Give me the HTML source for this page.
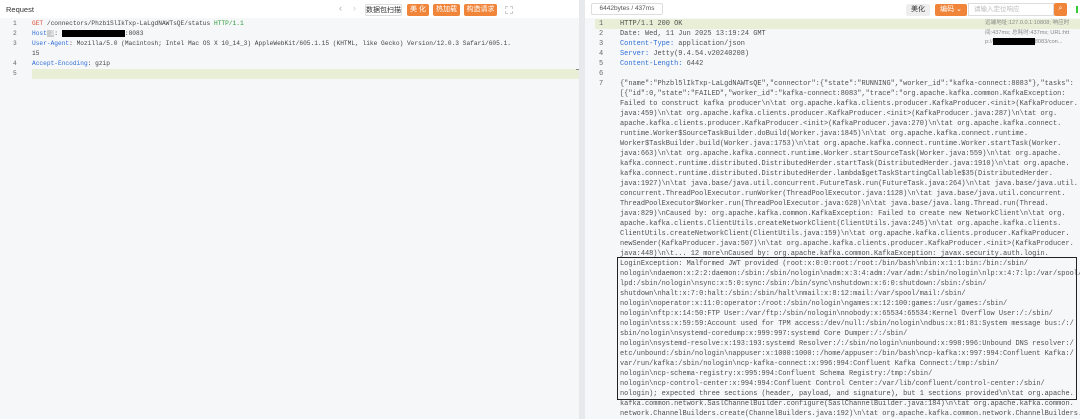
<!DOCTYPE html>
<html><head><meta charset="utf-8"><style>
*{margin:0;padding:0;box-sizing:border-box}
body{width:1080px;height:419px;background:#fff;position:relative;overflow:hidden;font-family:"Liberation Sans","Noto Sans CJK SC",sans-serif}
.abs{position:absolute}
.mono{font-family:"Liberation Mono",monospace;white-space:pre}
.k{color:#2f6fd6}
.btn{position:absolute;top:4px;height:12px;font-size:7px;line-height:12px;text-align:center;border-radius:2px;color:#fff;background:#f0853a}
.ln{position:absolute;color:#666;text-align:right}
</style></head><body>
<!-- left panel -->
<div class="abs" style="left:0;top:0;width:579px;height:419px;background:#f6f7f9"></div>
<div class="abs" style="left:0;top:0;width:579px;height:18px;background:#fff"></div>
<div class="abs" style="left:6px;top:5px;font-size:7.5px;color:#333">Request</div>
<div class="abs" style="left:339px;top:3px;font-size:9px;color:#aaa">‹</div>
<div class="abs" style="left:353px;top:3px;font-size:9px;color:#ccc">›</div>
<div class="btn" style="left:365px;width:37px;background:#fff;color:#333;border:1px solid #ddd">数据包扫描</div>
<div class="btn" style="left:407px;width:22px">美 化</div>
<div class="btn" style="left:433px;width:27px">热加载</div>
<div class="btn" style="left:464px;width:33px">构造请求</div>
<div class="abs" style="left:505px;top:6px;width:8px;height:8px;border:1px dashed #ccc"></div>
<div class="abs" style="left:32px;top:69px;width:547px;height:10px;background:#e9efd6"></div>
<div class="abs" style="left:576px;top:69px;width:3px;height:1px;background:#888"></div>
<div class="mono abs" style="left:0;top:19px;font-size:6.2px;line-height:10px;color:#444">
<span class="ln" style="left:13px;top:0">1</span><span class="ln" style="left:13px;top:10px">2</span><span class="ln" style="left:13px;top:20px">3</span><span class="ln" style="left:13px;top:40px">4</span><span class="ln" style="left:13px;top:50px">5</span>
<span class="abs" style="left:32px;top:0"><span style="color:#e0503a">GET</span> /connectors/Phzb1SlIkTxp-LaLgdNAWTsQE/status <span style="color:#2a9a3a">HTTP/1.1</span>
<span class="k">Host</span><span style="background:#ccc;color:#fff"> 2</span>: <span style="background:#000">                 </span>:8083
<span class="k">User-Agent</span>: Mozilla/5.0 (Macintosh; Intel Mac OS X 10_14_3) AppleWebKit/605.1.15 (KHTML, like Gecko) Version/12.0.3 Safari/605.1.
15
<span class="k">Accept-Encoding</span>: gzip</span>
</div>
<!-- divider -->
<div class="abs" style="left:579px;top:0;width:6px;height:419px;background:#e8e9ec"></div>
<!-- right panel -->
<div class="abs" style="left:585px;top:0;width:495px;height:419px;background:#f6f7f9"></div>
<div class="abs" style="left:585px;top:0;width:495px;height:18px;background:#fff"></div>
<div class="abs" style="left:591px;top:3px;width:72px;height:12px;border:1px solid #ddd;border-radius:2px;font-size:6.5px;line-height:10px;text-align:center;color:#555">6442bytes / 437ms</div>
<div class="btn" style="left:906px;width:24px;background:#eee;color:#333">美化</div>
<div class="btn" style="left:935px;width:32px">编码 ⌄</div>
<div class="abs" style="left:968px;top:3px;width:86px;height:13px;border:1px solid #ddd;font-size:6.5px;line-height:11px;color:#bbb;padding-left:5px">请输入定位响应</div>
<div class="btn" style="left:1054px;top:3px;height:13px;width:13px;font-size:7px">⌕</div>
<div class="abs" style="left:1076px;top:6px;width:2px;height:7px;background:#3c3"></div>
<div class="abs" style="left:595px;top:19px;width:485px;height:10px;background:#e9efd6"></div>
<div class="mono abs" style="left:585px;top:19px;font-size:6.95px;line-height:10px;color:#505050">
<span class="ln" style="left:14px;top:0">1</span><span class="ln" style="left:14px;top:10px">2</span><span class="ln" style="left:14px;top:20px">3</span><span class="ln" style="left:14px;top:30px">4</span><span class="ln" style="left:14px;top:40px">5</span><span class="ln" style="left:14px;top:50px">6</span><span class="ln" style="left:14px;top:60px">7</span>
<span class="abs" style="left:35px;top:0">HTTP/1.1 200 OK
Date: Wed, 11 Jun 2025 13:19:24 GMT
<span class="k">Content-Type:</span> application/json
<span class="k">Server:</span> Jetty(9.4.54.v20240208)
<span class="k">Content-Length:</span> 6442

{"name":"Phzbl5lIkTxp-LaLgdNAWTsQE","connector":{"state":"RUNNING","worker_id":"kafka-connect:8083"},"tasks":
[{"id":0,"state":"FAILED","worker_id":"kafka-connect:8083","trace":"org.apache.kafka.common.KafkaException:
Failed to construct kafka producer\n\tat org.apache.kafka.clients.producer.KafkaProducer.&lt;init&gt;(KafkaProducer.
java:459)\n\tat org.apache.kafka.clients.producer.KafkaProducer.&lt;init&gt;(KafkaProducer.java:287)\n\tat org.
apache.kafka.clients.producer.KafkaProducer.&lt;init&gt;(KafkaProducer.java:270)\n\tat org.apache.kafka.connect.
runtime.Worker$SourceTaskBuilder.doBuild(Worker.java:1845)\n\tat org.apache.kafka.connect.runtime.
Worker$TaskBuilder.build(Worker.java:1753)\n\tat org.apache.kafka.connect.runtime.Worker.startTask(Worker.
java:663)\n\tat org.apache.kafka.connect.runtime.Worker.startSourceTask(Worker.java:559)\n\tat org.apache.
kafka.connect.runtime.distributed.DistributedHerder.startTask(DistributedHerder.java:1910)\n\tat org.apache.
kafka.connect.runtime.distributed.DistributedHerder.lambda$getTaskStartingCallable$35(DistributedHerder.
java:1927)\n\tat java.base/java.util.concurrent.FutureTask.run(FutureTask.java:264)\n\tat java.base/java.util.
concurrent.ThreadPoolExecutor.runWorker(ThreadPoolExecutor.java:1128)\n\tat java.base/java.util.concurrent.
ThreadPoolExecutor$Worker.run(ThreadPoolExecutor.java:628)\n\tat java.base/java.lang.Thread.run(Thread.
java:829)\nCaused by: org.apache.kafka.common.KafkaException: Failed to create new NetworkClient\n\tat org.
apache.kafka.clients.ClientUtils.createNetworkClient(ClientUtils.java:245)\n\tat org.apache.kafka.clients.
ClientUtils.createNetworkClient(ClientUtils.java:159)\n\tat org.apache.kafka.clients.producer.KafkaProducer.
newSender(KafkaProducer.java:507)\n\tat org.apache.kafka.clients.producer.KafkaProducer.&lt;init&gt;(KafkaProducer.
java:448)\n\t... 12 more\nCaused by: org.apache.kafka.common.KafkaException: javax.security.auth.login.
LoginException: Malformed JWT provided (root:x:0:0:root:/root:/bin/bash\nbin:x:1:1:bin:/bin:/sbin/
nologin\ndaemon:x:2:2:daemon:/sbin:/sbin/nologin\nadm:x:3:4:adm:/var/adm:/sbin/nologin\nlp:x:4:7:lp:/var/spool/
lpd:/sbin/nologin\nsync:x:5:0:sync:/sbin:/bin/sync\nshutdown:x:6:0:shutdown:/sbin:/sbin/
shutdown\nhalt:x:7:0:halt:/sbin:/sbin/halt\nmail:x:8:12:mail:/var/spool/mail:/sbin/
nologin\noperator:x:11:0:operator:/root:/sbin/nologin\ngames:x:12:100:games:/usr/games:/sbin/
nologin\nftp:x:14:50:FTP User:/var/ftp:/sbin/nologin\nnobody:x:65534:65534:Kernel Overflow User:/:/sbin/
nologin\ntss:x:59:59:Account used for TPM access:/dev/null:/sbin/nologin\ndbus:x:81:81:System message bus:/:/
sbin/nologin\nsystemd-coredump:x:999:997:systemd Core Dumper:/:/sbin/
nologin\nsystemd-resolve:x:193:193:systemd Resolver:/:/sbin/nologin\nunbound:x:998:996:Unbound DNS resolver:/
etc/unbound:/sbin/nologin\nappuser:x:1000:1000::/home/appuser:/bin/bash\ncp-kafka:x:997:994:Confluent Kafka:/
var/run/kafka:/sbin/nologin\ncp-kafka-connect:x:996:994:Confluent Kafka Connect:/tmp:/sbin/
nologin\ncp-schema-registry:x:995:994:Confluent Schema Registry:/tmp:/sbin/
nologin\ncp-control-center:x:994:994:Confluent Control Center:/var/lib/confluent/control-center:/sbin/
nologin); expected three sections (header, payload, and signature), but 1 sections provided\n\tat org.apache.
kafka.common.network.SaslChannelBuilder.configure(SaslChannelBuilder.java:184)\n\tat org.apache.kafka.common.
network.ChannelBuilders.create(ChannelBuilders.java:192)\n\tat org.apache.kafka.common.network.ChannelBuilders.</span>
</div>
<div class="abs" style="left:617px;top:257px;width:460px;height:143px;border:1.5px solid #222"></div>
<div class="abs" style="left:985px;top:19px;width:95px;font-size:5.6px;line-height:9.5px;color:#888;background:#f6f7f9">
<div style="background:#e9efd6">远端地址:127.0.0.1:10808; 响应时</div>
<div>间:437ms; 总耗时:437ms; URL:htt</div>
<div>p://<span style="display:inline-block;width:42px;height:7px;background:#000;vertical-align:middle"></span>8083/con...</div>
</div>
</body></html>
